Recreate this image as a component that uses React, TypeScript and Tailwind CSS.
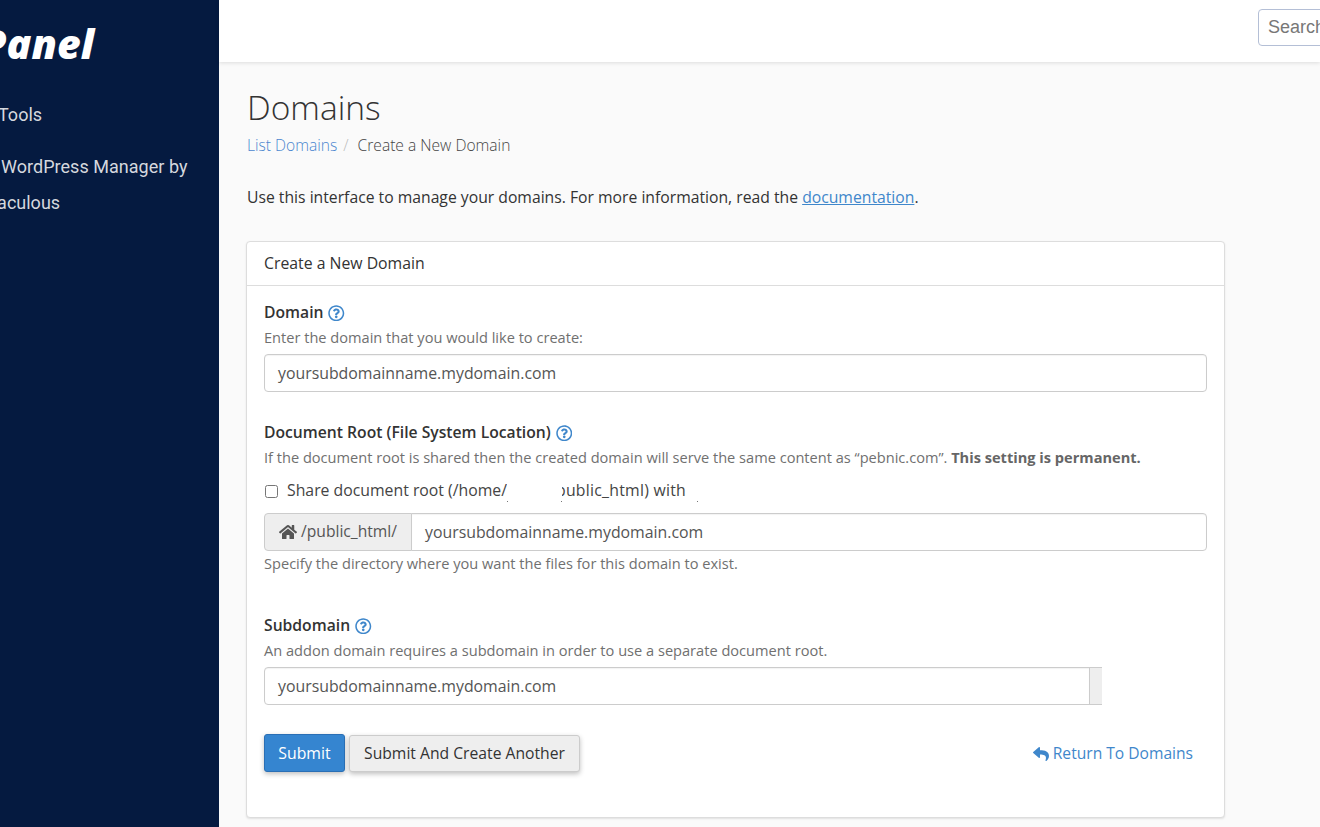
import { FaHome, FaRegQuestionCircle, FaReply } from "react-icons/fa";

const openSans = "font-['Open_Sans',sans-serif]";

function Help() {
  return <FaRegQuestionCircle className="ml-[5px] inline-block text-[16.5px] text-[#3f87cb] align-[-3px]" />;
}

function Label({ text }: { text: string }) {
  return (
    <div className="h-[20px] text-[15.7px] font-semibold leading-[20px] text-[#333]">
      {text}
      <Help />
    </div>
  );
}

function Hint({ children }: { children: React.ReactNode }) {
  return <div className="text-[14.6px] leading-[20px] text-[#707070]">{children}</div>;
}

const inputClass =
  "h-[38px] flex items-center border border-[#ccc] bg-white px-[13px] pt-[2px] text-[15.85px] text-[#555] shadow-[inset_0_1px_1px_rgba(0,0,0,0.05)]";

export default function App() {
  return (
    <div className={`flex h-[827px] w-[1320px] overflow-hidden bg-[#fafafa] ${openSans}`}>
      <aside className="w-[219px] shrink-0 overflow-hidden bg-[#051a40] font-['Roboto',sans-serif] text-[18px] text-[#d5d8de]">
        <div className="-ml-[19px] mt-[21px] h-[44px] text-[41px] font-extrabold italic leading-[44px] text-white font-['Open_Sans',sans-serif]">
          Panel
        </div>
        <div className="-ml-[2px] mt-[37px] leading-[26px]">Tools</div>
        <div className="mt-[26px] pl-[1px] leading-[26px] tracking-[0.03px]">WordPress Manager by</div>
        <div className="-ml-[36px] mt-[10px] leading-[26px]">Softaculous</div>
      </aside>

      <div className="min-w-0 flex-1">
        <header className="flex h-[62px] items-start overflow-hidden bg-white pl-[1039px] pt-[9px] shadow-[0_1px_4px_rgba(0,0,0,0.12)]">
          <div className="flex h-[37px] w-[120px] shrink-0 items-center rounded-[4px] border border-[#b4bfd6] bg-white pl-[9px] font-['Liberation_Sans',sans-serif] text-[18px] text-[#777]">
            Search
          </div>
        </header>

        <main className="pl-[28px]">
          <h1 className="mt-[23px] text-[33.5px] font-light leading-[44px] text-[#333]">Domains</h1>
          <nav className="mt-[6px] flex text-[15.6px] font-light leading-[20px]">
            <span className="text-[#4a86cf]">List Domains</span>
            <span className="pl-[6px] pr-[9px] text-[#bbb]">/</span>
            <span className="text-[#444]">Create a New Domain</span>
          </nav>
          <p className="mt-[32px] text-[15.72px] leading-[20px] text-[#333]">
            Use this interface to manage your domains. For more information, read the{" "}
            <span className="text-[#3f87cb] underline">documentation</span>.
          </p>

          <section className="mt-[34px] h-[577px] w-[979px] -translate-x-[1px] rounded-[4px] border border-[#ddd] bg-white shadow-[0_1px_2px_rgba(0,0,0,0.1)]">
            <div className="flex h-[44px] items-center border-b border-[#ddd] px-[17px] text-[15.8px] text-[#333]">
              Create a New Domain
            </div>
            <div className="px-[17px] pt-[16px]">
              <Label text="Domain" />
              <div className="mt-[5px]">
                <Hint>Enter the domain that you would like to create:</Hint>
              </div>
              <div className={`mt-[7px] w-[943px] rounded-[4px] ${inputClass}`}>yoursubdomainname.mydomain.com</div>

              <div className="mt-[30px]">
                <Label text="Document Root (File System Location)" />
              </div>
              <div className="mt-[5px]">
                <Hint>
                  If the document root is shared then the created domain will serve the same content as “pebnic.com”.{" "}
                  <b className="font-bold text-[#666]">This setting is permanent.</b>
                </Hint>
              </div>
              <label className="mt-[11px] flex h-[26px] items-center text-[15.8px] text-[#444]">
                <input type="checkbox" className="ml-[1px] mr-[9px] h-[13px] w-[13px]" />
                <span className="w-[220px] shrink-0 whitespace-nowrap">Share document root (/home/</span>
                <span className="relative z-10 h-[20px] w-[55px] shrink-0 bg-white">
                  <span className="absolute -bottom-[1px] left-0 h-[1px] w-[1px] bg-[#777]" />
                  <span className="absolute -bottom-[1px] right-0 h-[1px] w-[1px] bg-[#777]" />
                </span>
                <span className="-ml-[6px] tracking-[0.25px]">public_html) with</span>
                <span className="relative ml-[11px] h-[20px] w-[1px]">
                  <span className="absolute -bottom-[1px] left-0 h-[1px] w-[1px] bg-[#777]" />
                </span>
              </label>
              <div className="mt-[9px] flex w-[943px]">
                <div className="flex h-[38px] w-[148px] shrink-0 items-center gap-[4px] rounded-l-[4px] border border-[#ccc] bg-[#eee] pl-[14px] text-[15.65px] text-[#555]">
                  <FaHome className="text-[18px]" />
                  /public_html/
                </div>
                <div className={`-ml-[1px] flex-1 rounded-r-[4px] ${inputClass}`}>yoursubdomainname.mydomain.com</div>
              </div>
              <div className="mt-[2px]">
                <Hint>Specify the directory where you want the files for this domain to exist.</Hint>
              </div>

              <div className="mt-[42px]">
                <Label text="Subdomain" />
              </div>
              <div className="mt-[5px]">
                <Hint>An addon domain requires a subdomain in order to use a separate document root.</Hint>
              </div>
              <div className="mt-[7px] flex w-[838px]">
                <div className={`flex-1 rounded-l-[4px] ${inputClass}`}>yoursubdomainname.mydomain.com</div>
                <div className="-ml-[1px] h-[38px] w-[13px] border-y border-l border-[#ccc] bg-[#eee]" />
              </div>

              <div className="mt-[29px] flex w-[943px] items-center">
                <button className="h-[38px] w-[81px] rounded-[3px] border border-[#2a6fb5] bg-[#3585d0] pt-[2px] text-[15.8px] text-white shadow-[0_2px_5px_rgba(0,0,0,0.25)]">
                  Submit
                </button>
                <button className="ml-[4px] h-[37px] w-[231px] rounded-[3px] border border-[#ccc] bg-[#eee] pt-[2px] text-[15.7px] text-[#333] shadow-[0_2px_5px_rgba(0,0,0,0.25)]">
                  Submit And Create Another
                </button>
                <span className="ml-auto mr-[14px] mt-[2px] flex items-center gap-[4px] text-[15.6px] text-[#3f87cb]">
                  <FaReply className="text-[16px]" />
                  Return To Domains
                </span>
              </div>
            </div>
          </section>
        </main>
      </div>
    </div>
  );
}
